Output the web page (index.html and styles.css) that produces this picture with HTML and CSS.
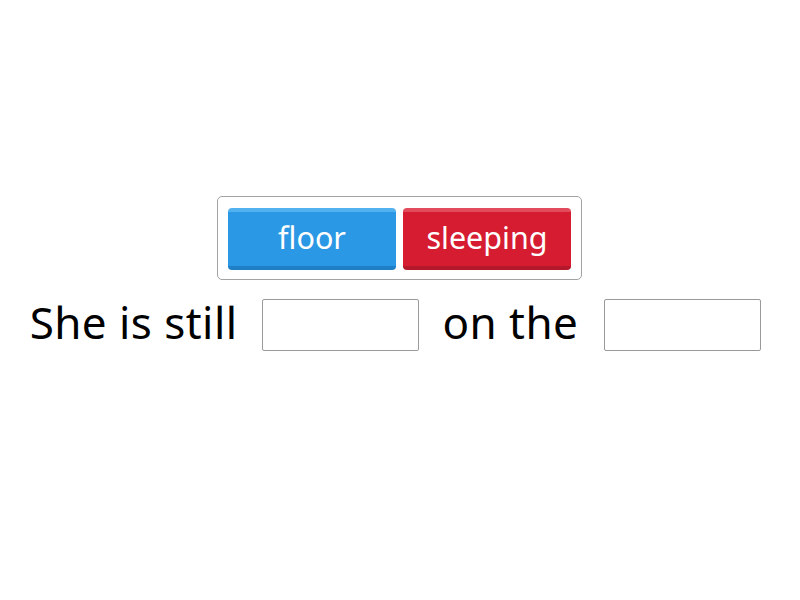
FILE: index.html
```html
<!DOCTYPE html>
<html>
<head>
<meta charset="utf-8">
<link rel="stylesheet" href="styles.css">
</head>
<body>
<div class="page">
  <div class="bank">
    <div class="tile tile-blue">floor</div>
    <div class="tile tile-red">sleeping</div>
  </div>
  <div class="sentence">
    <span class="word">She is still</span>
    <span class="blank"></span>
    <span class="word">on the</span>
    <span class="blank blank-last"></span>
  </div>
</div>
</body>
</html>
```
FILE: styles.css
```css
html, body {
  margin: 0;
  padding: 0;
  background: #ffffff;
}
.page {
  width: 800px;
  height: 600px;
  display: flex;
  flex-direction: column;
  align-items: center;
  padding-top: 196px;
  box-sizing: border-box;
  font-family: "Noto Sans", sans-serif;
}
.bank {
  display: flex;
  gap: 7px;
  padding: 11px 10px 9px 10px;
  border: 1px solid #a3a3a3;
  border-radius: 5px;
  margin-left: -1px;
}
.tile {
  width: 168px;
  height: 62px;
  box-sizing: border-box;
  border-radius: 4px;
  color: #ffffff;
  font-size: 30.5px;
  display: flex;
  align-items: center;
  justify-content: center;
  padding-bottom: 5px;
}
.tile-blue {
  background: #2a98e4;
  border-top: 4px solid #52b2ef;
  border-bottom: 4px solid #1f7fc6;
}
.tile-red {
  background: #d61c31;
  border-top: 4px solid #e24b5b;
  border-bottom: 4px solid #b3192b;
}
.sentence {
  display: flex;
  align-items: center;
  gap: 24px;
  margin-top: 19px;
  margin-left: -9px;
  font-size: 44px;
  letter-spacing: 0.45px;
  line-height: 52px;
  color: #000000;
}
.word {
  position: relative;
  top: -3px;
}
.blank {
  width: 157px;
  height: 52px;
  box-sizing: border-box;
  border: 1px solid #9a9a9a;
  border-radius: 2px;
  background: #ffffff;
}
.blank-last {
  margin-left: 2px;
}
```
